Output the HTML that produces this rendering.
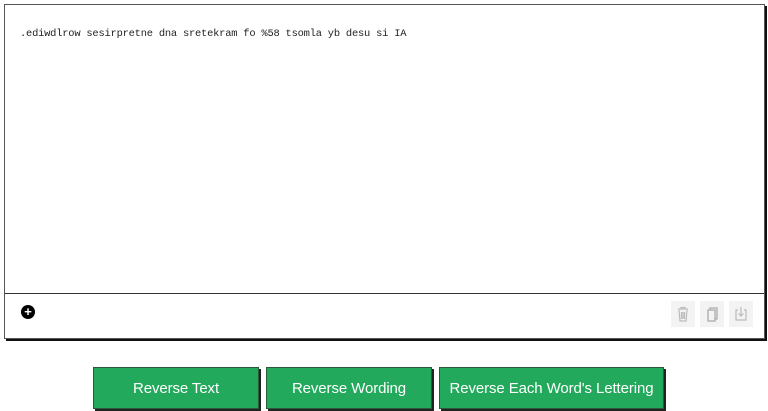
<!DOCTYPE html>
<html><head><style>
body{margin:0;width:768px;height:411px;background:#fff;position:relative;overflow:hidden;font-family:"Liberation Sans",sans-serif}
.box{position:absolute;left:4px;top:4px;width:759px;height:333px;border:1px solid #555;box-shadow:2px 2px 0 #111}
.txt{position:absolute;left:15px;top:23px;font-family:"Liberation Mono",monospace;font-size:10.4px;letter-spacing:-0.2px;color:#222}
.bar{position:absolute;left:0;right:0;top:288px;border-top:1px solid #333}
.plus{position:absolute;left:16px;top:300px;width:14px;height:14px;border-radius:50%;background:#000;color:#fff;font-size:13px;line-height:14px;text-align:center;font-weight:bold}
.ib{position:absolute;top:296px;width:24px;height:26px;background:#f3f3f3}
.btn{position:absolute;top:367px;height:42px;background:#22a95c;border:1px solid #2a5a3a;box-shadow:2px 2px 0 #222;color:#fff;font-size:15px;line-height:42px;text-align:center;box-sizing:border-box;letter-spacing:-0.1px}
</style></head><body>
<div class="box">
<div class="txt">.ediwdlrow sesirpretne dna sretekram fo %58 tsomla yb desu si IA</div>
<div class="bar"></div>
<div class="plus">+</div>
<div class="ib" style="left:666px"><svg width="24" height="26" viewBox="0 0 24 26" fill="none" stroke="#bbb" stroke-width="1.2"><path d="M7 8h10M10 8V6.5h4V8M8 9l1 11h6l1-11M10.5 11v7M12 11v7M13.5 11v7"/></svg></div>
<div class="ib" style="left:695px"><svg width="24" height="26" viewBox="0 0 24 26" fill="none" stroke="#aaa" stroke-width="1.3"><rect x="8" y="9" width="7" height="11"/><path d="M10 9V7h7v11h-2"/></svg></div>
<div class="ib" style="left:724px"><svg width="24" height="26" viewBox="0 0 24 26" fill="none" stroke="#bbb" stroke-width="1.2"><path d="M9 9H7v10h10V9h-2M12 6v9M9.5 12.5L12 15l2.5-2.5"/></svg></div>
</div>
<div class="btn" style="left:93px;width:166px">Reverse Text</div>
<div class="btn" style="left:266px;width:166px">Reverse Wording</div>
<div class="btn" style="left:439px;width:225px">Reverse Each Word's Lettering</div>
</body></html>
